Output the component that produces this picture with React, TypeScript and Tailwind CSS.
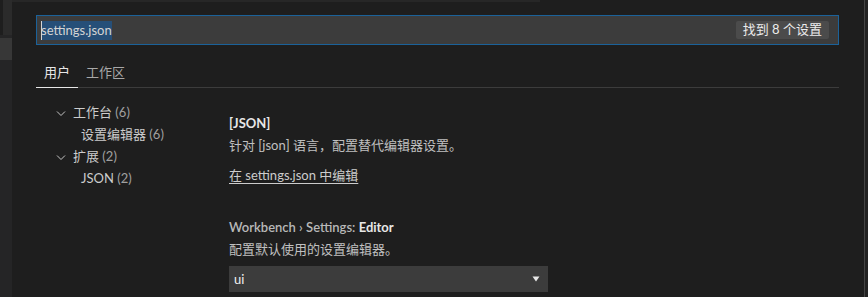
const font = "font-['Lato','Noto_Sans_CJK_SC',sans-serif]";

function Chevron() {
  return (
    <svg width="16" height="16" viewBox="0 0 16 16" className="shrink-0">
      <path d="M4 6.5l4 4 4-4" fill="none" stroke="#c5c5c5" strokeWidth="1" />
    </svg>
  );
}

type Node = { label: string; count: number; depth: number };

const tree: Node[] = [
  { label: "工作台", count: 6, depth: 0 },
  { label: "设置编辑器", count: 6, depth: 1 },
  { label: "扩展", count: 2, depth: 0 },
  { label: "JSON", count: 2, depth: 1 },
];

export default function App() {
  return (
    <div className={`flex h-[297px] w-[868px] overflow-hidden bg-[#1e1e1e] text-[13px] text-[#cccccc] ${font}`}>
      {/* sliver of the sidebar on the left */}
      <div className="flex w-[12px] shrink-0 flex-col bg-[#252526]">
        <div className="h-[35px] border-l-[3px] border-[#1e1e1e] bg-[#2b2b2b]" />
        <div className="h-[3px]" />
        <div className="h-[22px] bg-[#373737]" />
      </div>

      <div className="flex min-w-0 flex-1 flex-col">
        <div className="h-[2px] w-[528px] bg-[#272727]" />
        <div className="pl-[24px] pr-[25px]">
          {/* search */}
          <div className="mt-[13px] flex h-[30px] items-center border border-[#1b629a] bg-[#3c3c3c] pl-[4px] pr-[9px]">
            <span className="relative bg-[#264f78] leading-[19px] text-[#d4d4d4]">
              <span className="absolute left-0 top-0 h-full w-px bg-[#d4d4d4]" />
              settings.json
            </span>
            <div className="ml-auto flex h-[18px] items-center rounded-[2px] bg-[#4b4b4b] px-[7px] text-[#ebebeb]">
              找到 8 个设置
            </div>
          </div>

          {/* scope tabs */}
          <div className="mt-[13px] flex h-[30px] items-stretch border-b border-[#3c3c3c]">
            <div className="-mb-px flex items-center border-b border-[#e7e7e7] px-[8px] text-[#e7e7e7]">用户</div>
            <div className="flex items-center px-[8px] text-[#a8a8a8]">工作区</div>
          </div>

          <div className="flex">
            {/* toc */}
            <div className="w-[193px] shrink-0 pt-[14px]">
              {tree.map((n) => (
                <div
                  key={n.label}
                  className={`flex h-[22px] items-center ${n.depth === 0 ? "pl-[17px]" : "pl-[45px]"}`}
                >
                  {n.depth === 0 && <Chevron />}
                  <span className={n.depth === 0 ? "ml-[4px] text-[#cccccc]" : "text-[#cccccc]"}>
                    {n.label} <span className="text-[#a0a0a0]">({n.count})</span>
                  </span>
                </div>
              ))}
            </div>

            {/* settings list */}
            <div className="flex-1 pt-[24px] leading-[22px]">
              <div className="font-bold text-[#e7e7e7]">[JSON]</div>
              <div className="text-[#c0c0c0]">针对 [json] 语言，配置替代编辑器设置。</div>
              <div className="mt-[8px] text-[#cccccc] underline underline-offset-[3px]">在 settings.json 中编辑</div>

              <div className="mt-[30px] font-semibold text-[#b8b8b8]">
                Workbench › Settings: <span className="font-bold text-[#e7e7e7]">Editor</span>
              </div>
              <div className="text-[#c0c0c0]">配置默认使用的设置编辑器。</div>
              <div className="mt-[6px] flex h-[26px] w-[319px] items-center bg-[#3c3c3c] pl-[5px] pr-[8px] text-[#f0f0f0]">
                ui
                <svg width="8" height="6" viewBox="0 0 8 6" className="ml-auto">
                  <path d="M0.5 0.5h7L4 5.5z" fill="#e8e8e8" />
                </svg>
              </div>
            </div>
          </div>
        </div>
      </div>

      {/* scrollbar edge on the right */}
      <div className="w-[4px] shrink-0 border-l border-[#454545] bg-[#232323]" />
    </div>
  );
}
